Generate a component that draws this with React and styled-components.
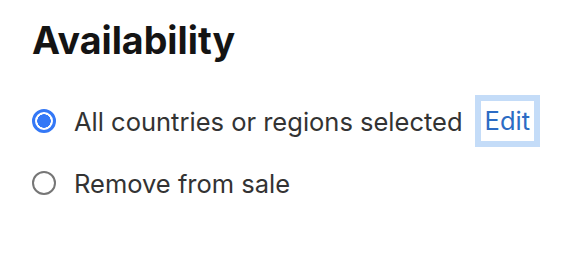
import React, { useState } from "react";
import styled, { createGlobalStyle } from "styled-components";

const GlobalStyle = createGlobalStyle`
  body {
    margin: 0;
    background: #ffffff;
    font-family: Inter, "Liberation Sans", sans-serif;
  }
`;

const OPTIONS = [
  { id: "all", label: "All countries or regions selected", editable: true },
  { id: "remove", label: "Remove from sale" },
];

const App = () => {
  const [selected, setSelected] = useState("all");

  return (
    <Section>
      <GlobalStyle />
      <Title>Availability</Title>
      <List>
        {OPTIONS.map((opt) => (
          <Row key={opt.id}>
            <Label>
              <Radio
                type="radio"
                name="availability"
                checked={selected === opt.id}
                onChange={() => setSelected(opt.id)}
              />
              <span>{opt.label}</span>
            </Label>
            {opt.editable && <EditButton $focused>Edit</EditButton>}
          </Row>
        ))}
      </List>
    </Section>
  );
};

const Section = styled.section`
  padding: 18px 16px 18px 32px;
`;

const Title = styled.h2`
  margin: 0 0 32px;
  font-size: 37.6px;
  font-weight: 700;
  line-height: 46px;
  color: #141414;
`;

const List = styled.div`
  display: flex;
  flex-direction: column;
  gap: 12px;
`;

const Row = styled.div`
  display: flex;
  align-items: center;
  height: 50px;
  gap: 16px;
`;

const Label = styled.label`
  display: flex;
  align-items: center;
  flex-shrink: 0;
  gap: 18px;
  font-size: 25.5px;
  color: #333333;
  white-space: nowrap;
  cursor: pointer;
`;

const Radio = styled.input`
  appearance: none;
  margin: 0;
  width: 24px;
  height: 24px;
  border-radius: 50%;
  border: 2px solid #767676;
  box-sizing: border-box;
  background: #fff;
  cursor: pointer;

  &:checked {
    border: 3px solid #3478f6;
    background: radial-gradient(circle, #3478f6 0 6.5px, #fff 7px);
  }
`;

const EditButton = styled.button`
  flex-shrink: 0;
  margin-left: 2px;
  padding: 8px 4px;
  border: 0;
  background: #fff;
  font-family: inherit;
  font-size: 25.5px;
  line-height: 24px;
  color: #2c6cc4;
  cursor: pointer;
  outline: ${(p) => (p.$focused ? "6px solid #c4dcf8" : "none")};
`;

export default App;
